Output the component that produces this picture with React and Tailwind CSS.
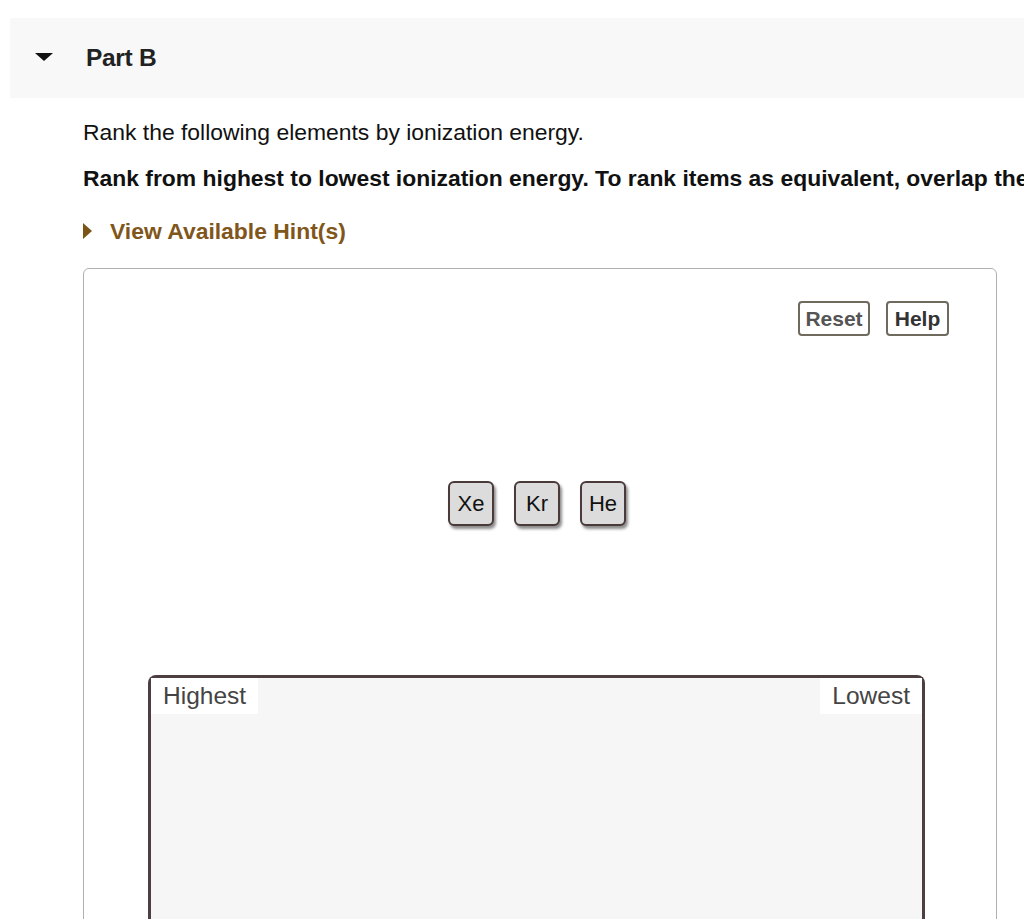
export default function App() {
  const elements = ["Xe", "Kr", "He"];
  return (
    <div className="min-h-[919px] bg-white pt-[18px] pl-[10px] font-['Liberation_Sans',Arial,sans-serif] text-[#111] overflow-hidden">
      <div className="flex h-[80px] items-center bg-[#f8f8f8]">
        <svg width="18" height="9" viewBox="0 0 18 9" className="ml-[25px] mt-[-2px]">
          <polygon points="0,0 18,0 9,8" fill="#111" />
        </svg>
        <h2 className="ml-[33px] text-[24.5px] font-bold tracking-[-0.3px] text-[#222]">Part B</h2>
      </div>

      <div className="pl-[73px]">
        <p className="mt-[21px] text-[22.9px] leading-[26px] text-[#111]">
          Rank the following elements by ionization energy.
        </p>
        <p className="mt-[20px] whitespace-nowrap text-[22.9px] font-bold leading-[26px] text-[#111]">
          Rank from highest to lowest ionization energy. To rank items as equivalent, overlap them.
        </p>
        <div className="mt-[27px] flex items-center">
          <svg width="9" height="16" viewBox="0 0 9 16">
            <polygon points="0,0 9,8 0,16" fill="#7a5418" />
          </svg>
          <span className="ml-[18px] text-[22.9px] font-bold leading-[26px] text-[#80561a]">
            View Available Hint(s)
          </span>
        </div>

        <div className="mt-[24px] h-[700px] w-[914px] rounded-[6px] border border-[#b0b0b0] bg-white">
          <div className="flex justify-end gap-[16px] pt-[32px] pr-[47px]">
            <button className="h-[35px] w-[72px] rounded-[4px] border-2 border-[#6f6a5e] bg-white text-[21px] font-bold leading-none text-[#555]">
              Reset
            </button>
            <button className="h-[35px] w-[63px] rounded-[4px] border-2 border-[#6f6a5e] bg-white text-[21px] font-bold leading-none text-[#333]">
              Help
            </button>
          </div>

          <div className="mt-[145px] flex justify-center gap-[20px] pr-[6px]">
            {elements.map((el) => (
              <div
                key={el}
                className="flex h-[45px] w-[46px] items-center justify-center rounded-[6px] border-2 border-[#4a3a3a] bg-[#dcdcdc] text-[22px] text-[#111] shadow-[2px_3px_3px_rgba(0,0,0,0.45)]"
              >
                {el}
              </div>
            ))}
          </div>

          <div className="ml-[64px] mt-[149px] h-[400px] w-[777px] rounded-t-[8px] border-x-[3px] border-t-[3px] border-[#4d3f3f] bg-[#f6f6f6]">
            <div className="flex justify-between">
              <span className="bg-white px-[12px] py-[2px] text-[24.5px] leading-[32px] text-[#444]">Highest</span>
              <span className="bg-white px-[12px] py-[2px] text-[24.5px] leading-[32px] text-[#444]">Lowest</span>
            </div>
          </div>
        </div>
      </div>
    </div>
  );
}
